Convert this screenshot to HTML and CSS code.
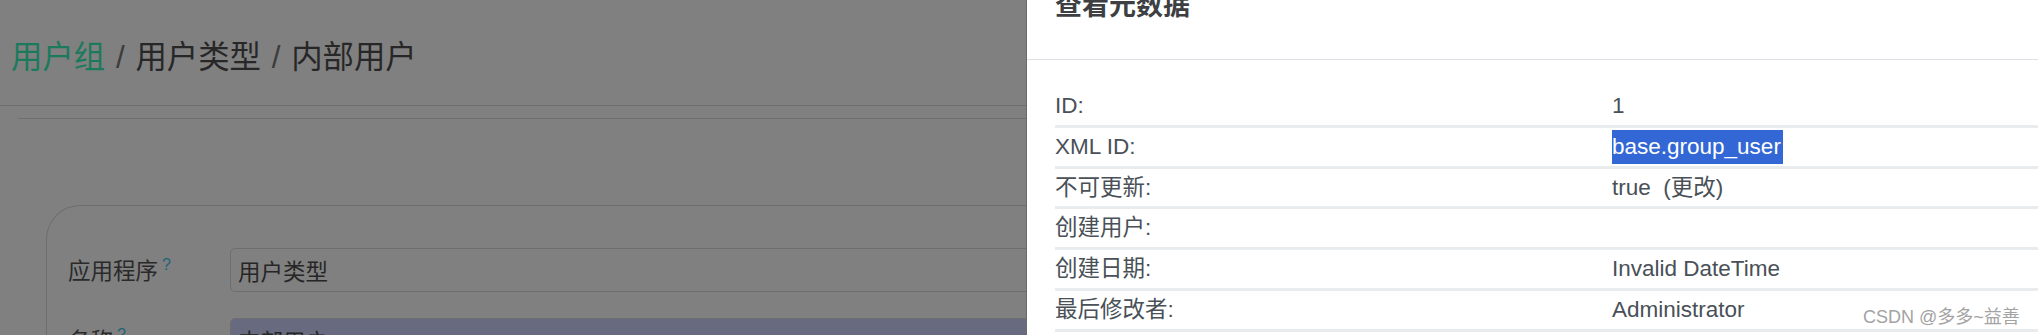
FILE: index.html
```html
<!DOCTYPE html>
<html lang="zh-CN">
<head>
    <meta charset="UTF-8">
    <meta name="viewport" content="width=device-width, initial-scale=1.0">
    <title>查看元数据</title>
    <link rel="stylesheet" href="styles.css">
</head>
<body>
    <div class="app">
        <!-- form view behind the dialog, dimmed -->
        <div class="backdrop-page">
            <div class="breadcrumb">
                <span class="crumb-link">用户组</span>
                <span class="crumb-sep">/</span>
                <span>用户类型</span>
                <span class="crumb-sep">/</span>
                <span>内部用户</span>
            </div>
            <div class="sheet-wrap">
                <div class="sheet">
                    <div class="field-row">
                        <label class="field-label">应用程序<sup>?</sup></label>
                        <div class="field-input">用户类型</div>
                    </div>
                    <div class="field-row">
                        <label class="field-label">名称<sup>?</sup></label>
                        <div class="field-input required">内部用户</div>
                    </div>
                </div>
            </div>
        </div>

        <aside class="panel">
            <header class="panel-head">
                <h4 class="panel-title">查看元数据</h4>
            </header>
            <div class="panel-body">
                <table class="meta">
                    <tr><td class="meta-label">ID:</td><td>1</td></tr>
                    <tr><td class="meta-label">XML ID:</td><td><span class="selected">base.group_user</span></td></tr>
                    <tr><td class="meta-label">不可更新:</td><td>true&nbsp; (更改)</td></tr>
                    <tr><td class="meta-label">创建用户:</td><td></td></tr>
                    <tr><td class="meta-label">创建日期:</td><td>Invalid DateTime</td></tr>
                    <tr><td class="meta-label">最后修改者:</td><td>Administrator</td></tr>
                </table>
            </div>
        </aside>

        <div class="watermark">CSDN @多多~益善</div>
    </div>
</body>
</html>
```

FILE: styles.css
```css
body {
    margin: 0;
    padding: 0;
    font-family: "Liberation Sans", "Noto Sans CJK SC", sans-serif;
    background-color: #fff;
    overflow: hidden;
}
.app {
    position: relative;
    display: flex;
    height: 335px;
    overflow: hidden;
}

/* dimmed page */
.backdrop-page {
    flex: 0 0 1026px;
    background-color: #808080;
    overflow: hidden;
    border-right: 1px solid #6a6a6a;
}
.breadcrumb {
    padding: 38px 0 27px 11px;
    line-height: 40px;
    font-size: 31.4px;
    color: #272727;
    border-bottom: 1px solid #6e6e6e;
    white-space: nowrap;
}
.crumb-link {
    color: #1b7a5c;
}
.crumb-sep {
    color: #3c3c3c;
    margin: 0 2px;
}
.sheet-wrap {
    margin: 12px 0 0 18px;
    border-top: 1px solid #6e6e6e;
    padding-top: 86px;
}
.sheet {
    margin-left: 28px;
    width: 1200px;
    border: 1px solid #6e6e6e;
    border-right: none;
    border-radius: 34px 0 0 0;
    padding: 42px 0 0 21px;
}
.field-row {
    display: flex;
    align-items: flex-start;
    margin-bottom: 26px;
}
.field-label {
    flex: 0 0 162px;
    font-size: 22.5px;
    line-height: 33.75px;
    color: #2a2a2a;
}
.field-label sup {
    font-size: 16px;
    color: #1e6478;
    margin-left: 4px;
    vertical-align: 9px;
}
.field-input {
    flex: 1;
    height: 42px;
    display: flex;
    align-items: center;
    padding-left: 7px;
    font-size: 22.5px;
    color: #262626;
    border: 1px solid #6e6e6e;
    border-radius: 5px;
}
.field-input.required {
    background-color: #686a80;
}

/* metadata dialog */
.panel {
    flex: 0 0 1100px;
    background-color: #fff;
    color: #495057;
}
.panel-head {
    display: flow-root;
    height: 59px;
    padding-left: 28px;
    border-bottom: 1px solid #dee2e6;
}
.panel-title {
    margin: -12px 0 0 0;
    font-size: 27px;
    line-height: 36px;
    font-weight: bold;
    color: #3d3f42;
}
.panel-body {
    padding: 27px 0 0 28px;
}
.meta {
    width: 100%;
    border-collapse: collapse;
    font-size: 22.5px;
    line-height: 33.75px;
}
.meta td {
    padding: 2px 0;
    border-bottom: 3px solid #e9ecef;
    white-space: nowrap;
    height: 33.75px;
}
.meta-label {
    width: 557px;
}
.selected {
    display: inline-block;
    background-color: #3367d6;
    color: #fff;
    padding-right: 2px;
}

.watermark {
    position: absolute;
    left: 1863px;
    top: 302px;
    font-size: 18px;
    line-height: 30px;
    color: #a3a3a3;
    text-shadow: 0 0 2px #fff;
    white-space: nowrap;
}
```
